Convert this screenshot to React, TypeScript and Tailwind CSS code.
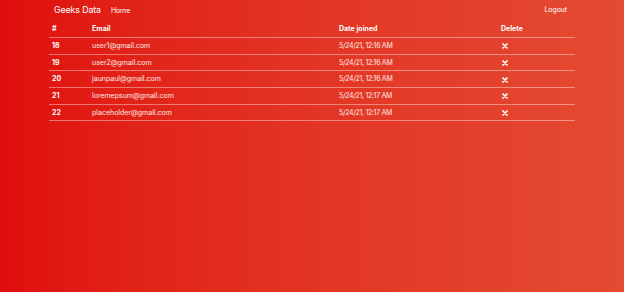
import React from 'react';

const users = [
  { id: 18, email: 'user1@gmail.com', joined: '5/24/21, 12:16 AM' },
  { id: 19, email: 'user2@gmail.com', joined: '5/24/21, 12:16 AM' },
  { id: 20, email: 'jaunpaul@gmail.com', joined: '5/24/21, 12:16 AM' },
  { id: 21, email: 'loremepsum@gmail.com', joined: '5/24/21, 12:17 AM' },
  { id: 22, email: 'placeholder@gmail.com', joined: '5/24/21, 12:17 AM' },
];

function CrossIcon() {
  return (
    <svg width="6" height="6" viewBox="0 0 6 6" className="block">
      <path d="M1 1 L5 5 M5 1 L1 5" stroke="white" strokeWidth="1.7" strokeLinecap="round" />
    </svg>
  );
}

export default function App() {
  return (
    <div
      className="w-[624px] h-[292px] bg-gradient-to-r from-[#e00c0c] to-[#e44b33] text-white overflow-hidden"
      style={{ fontFamily: '"Inter", "Noto Sans", sans-serif' }}
    >
      <div className="w-[526px] mx-auto">
        {/* Navbar */}
        <nav className="h-[20px] flex items-center justify-between pl-[5px] pr-[8px]">
          <div className="flex items-baseline gap-[10px]">
            <span className="text-[8.8px] tracking-[-0.1px]">Geeks Data</span>
            <span className="text-[7px] tracking-[-0.1px]">Home</span>
          </div>
          <span className="text-[7px] tracking-[-0.1px]">Logout</span>
        </nav>

        {/* Table */}
        <table className="w-full border-collapse text-[7px] table-fixed">
          <colgroup>
            <col className="w-[39px]" />
            <col className="w-[247px]" />
            <col className="w-[162px]" />
            <col />
          </colgroup>
          <thead>
            <tr className="h-[17.5px] border-b border-white/40 text-[7px]">
              <th className="text-left pl-[3px] pt-[2px] font-bold">#</th>
              <th className="text-left pl-[4px] pt-[2px] font-bold">Email</th>
              <th className="text-left pl-[4px] pt-[2px] font-bold">Date joined</th>
              <th className="text-left pl-[4px] pt-[2px] font-bold">Delete</th>
            </tr>
          </thead>
          <tbody>
            {users.map((u) => (
              <tr key={u.id} className="h-[16.7px] border-b border-white/40">
                <td className="pl-[3px] pt-[1px] font-bold">{u.id}</td>
                <td className="pl-[4px] pt-[1px] text-white/90">{u.email}</td>
                <td className="pl-[4px] pt-[1px] text-white/90 tracking-[-0.3px]">{u.joined}</td>
                <td className="pl-[5px] pt-[1px]">
                  <CrossIcon />
                </td>
              </tr>
            ))}
          </tbody>
        </table>
      </div>
    </div>
  );
}
